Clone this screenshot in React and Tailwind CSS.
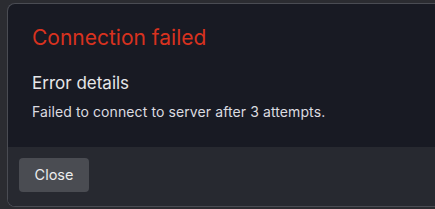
import React from "react";

export default function App() {
  return (
    <div
      className="w-[435px] h-[209px] overflow-hidden bg-[#2b2c31] pt-[3px] pl-[7px]"
      style={{ fontFamily: "Inter, 'Noto Sans', sans-serif" }}
    >
      <div className="w-[450px] h-[204px] flex flex-col rounded-l-lg border-l border-t border-b border-[#4a4c53] bg-[#181a23] overflow-hidden">
        {/* Body */}
        <div className="flex-1 pl-[24px] pt-[20px]">
          <h2 className="text-[21px] leading-7 text-[#d8321f] font-normal">
            Connection failed
          </h2>
          <h3 className="mt-[19px] text-[17px] leading-6 text-[#e6e6e8] font-normal">
            Error details
          </h3>
          <p className="mt-[7px] text-[14px] leading-5 text-[#dcdce0] tracking-[0.1px]">
            Failed to connect to server after 3 attempts.
          </p>
        </div>

        {/* Footer */}
        <div className="h-[59px] bg-[#272930] pl-[11px] pt-[11px]">
          <button className="w-[70px] h-[34px] rounded-[4px] bg-[#4a4c52] text-[14.5px] text-[#ececee]">
            Close
          </button>
        </div>
      </div>
    </div>
  );
}
